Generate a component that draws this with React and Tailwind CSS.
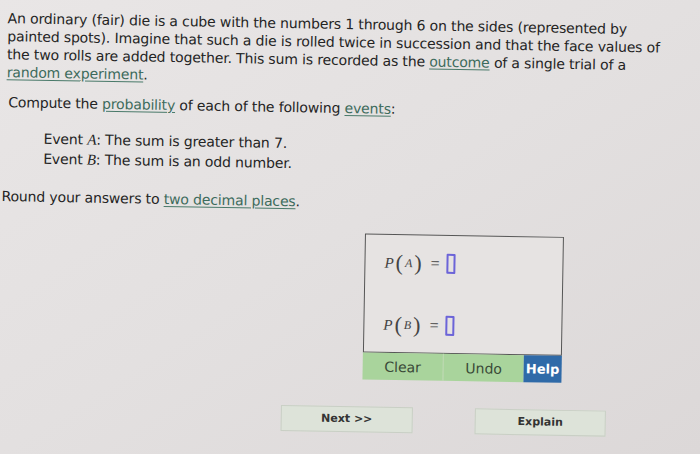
import React from 'react';

const U = ({ children }) => (
  <span className="underline decoration-[#4a7a6a] underline-offset-2 text-[#3d6b5c]">{children}</span>
);

const Blank = () => (
  <span className="inline-block w-[9px] h-[20px] border-2 border-[#6c64d8] rounded-[1px] align-middle ml-[7px]" />
);

const serif = { fontFamily: '"Liberation Serif", serif' };

export default function App() {
  return (
    <div
      className="w-[700px] h-[454px] overflow-hidden bg-gradient-to-br from-[#e9e6e6] via-[#e3e0e0] to-[#dcd8d8] text-[#242424] text-[14px] leading-[18px] tracking-[-0.15px]"
      style={{ fontFamily: '"DejaVu Sans", Verdana, sans-serif' }}
    >
      {/* the photo is tilted about a degree */}
      <div className="origin-top-left rotate-[1deg]">
        <div className="pl-[8px] pr-2 pt-[9px]">
          <p className="whitespace-nowrap">
            An ordinary (fair) die is a cube with the numbers 1 through 6 on the sides (represented by
            <br />
            painted spots). Imagine that such a die is rolled twice in succession and that the face values of
            <br />
            the two rolls are added together. This sum is recorded as the <U>outcome</U> of a single trial of a
            <br />
            <U>random experiment</U>.
          </p>
          <p className="mt-[12px] ml-[2px]">
            Compute the <U>probability</U> of each of the following <U>events</U>:
          </p>
          <div className="pl-[38px] mt-[18px] flex flex-col gap-[2px]">
            <p>
              Event <i style={serif} className="text-[15px]">A</i>: The sum is greater than 7.
            </p>
            <p>
              Event <i style={serif} className="text-[15px]">B</i>: The sum is an odd number.
            </p>
          </div>
          <p className="-ml-[3px] mt-[20px]">
            Round your answers to <U>two decimal places</U>.
          </p>
        </div>

        <div className="ml-[369px] mt-[22px] w-[199px]">
          <div className="h-[119px] border border-[#555] bg-[#e6e3e2] flex flex-col pl-[19px] pt-[17px] gap-[40px]">
            {['A', 'B'].map((l) => (
              <div key={l} className="flex items-center h-[22px] text-[15px] text-[#444] tracking-normal" style={serif}>
                <i>P</i>
                <span className="text-[22px] mx-[2px] font-light">(</span>
                <i className="text-[12px]">{l}</i>
                <span className="text-[22px] mx-[2px] font-light">)</span>
                <span className="ml-[7px] text-[16px]">=</span>
                <Blank />
              </div>
            ))}
          </div>
          <div className="flex h-[27px] text-[14px] tracking-normal">
            <button className="w-[81px] bg-[#a9d49c] text-[#3a4a38] border-r border-[#c3dcb8]">Clear</button>
            <button className="w-[80px] bg-[#a9d49c] text-[#3a4a38]">Undo</button>
            <button className="flex-1 bg-[#2f6aa8] text-white font-bold text-[13px]">Help</button>
          </div>
        </div>

        <div className="flex mt-[27px] tracking-normal">
          <button className="ml-[288px] w-[132px] h-[26px] bg-[#dde3d9] border border-[#c9cfc5] text-[11px] font-bold text-[#333]">
            Next &gt;&gt;
          </button>
          <button className="ml-[62px] w-[131px] h-[26px] bg-[#dde3d9] border border-[#c9cfc5] text-[11px] font-bold text-[#333]">
            Explain
          </button>
        </div>
      </div>
    </div>
  );
}
